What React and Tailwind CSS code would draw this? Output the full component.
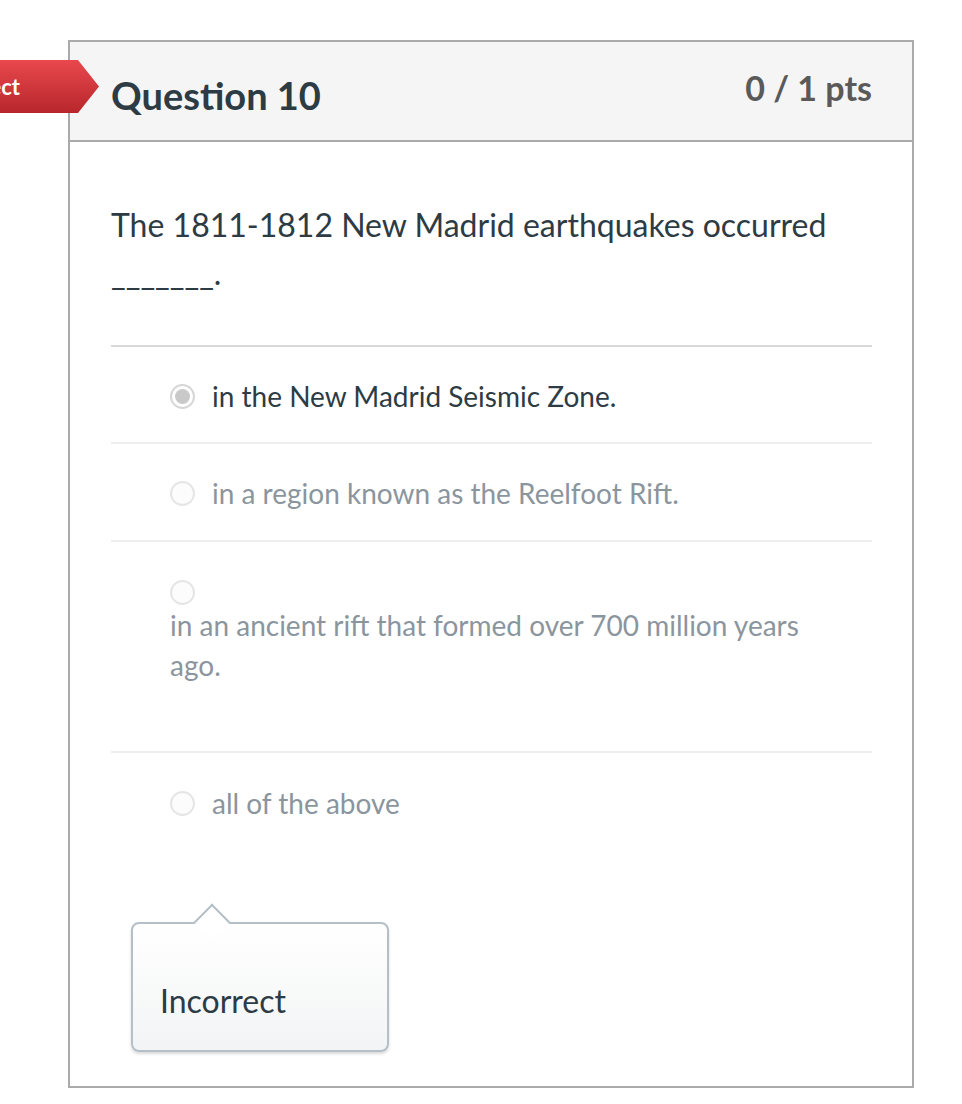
import React from 'react';

const answers = [
  { id: 1, text: 'in the New Madrid Seismic Zone.', selected: true, pad: 'pt-[29px] pb-[26px]' },
  { id: 2, text: 'in a region known as the Reelfoot Rift.', pad: 'pt-[29px] pb-[27px]' },
  { id: 3, text: 'in an ancient rift that formed over 700 million years ago.', long: true, pad: 'pt-[38px] pb-[66px]' },
  { id: 4, text: 'all of the above', last: true, pad: 'pt-[30px] pb-[26px]' },
];

function Radio({ selected }) {
  if (selected) {
    return (
      <span className="flex h-[25px] w-[25px] shrink-0 items-center justify-center rounded-full border-2 border-[#d6d6d6] bg-white">
        <span className="h-[15px] w-[15px] rounded-full bg-[#c9c9c9]" />
      </span>
    );
  }
  return <span className="block h-[25px] w-[25px] shrink-0 rounded-full border-2 border-[#e5e5e5] bg-[#fcfcfc]" />;
}

function AnswerRow({ answer }) {
  const color = answer.selected ? 'text-[#2d3b45]' : 'text-[#8b959e]';

  // long answers wrap under the radio, like the original page
  if (answer.long) {
    return (
      <div className={`border-b-2 border-[#eeeeee] pl-[59px] ${answer.pad}`}>
        <Radio />
        <div className={`w-[650px] text-[28px] leading-[40px] ${color}`}>{answer.text}</div>
      </div>
    );
  }

  return (
    <div className={`pl-[59px] ${answer.pad} ${answer.last ? '' : 'border-b-2 border-[#eeeeee]'}`}>
      <div className="flex h-[40px] items-center gap-[17px]">
        <Radio selected={answer.selected} />
        <span className={`text-[28px] leading-[40px] ${color}`}>{answer.text}</span>
      </div>
    </div>
  );
}

export default function App() {
  return (
    <div className="min-h-[1104px] bg-white pl-[68px] pt-[40px] font-['Lato','Noto_Sans',sans-serif]">
      <div className="relative w-[846px] border-2 border-[#aaaaaa] bg-white">

        {/* Result tag, mostly off screen */}
        <div className="absolute left-[-230px] top-[18px] z-10 flex h-[53px] w-[259px] items-center justify-end bg-gradient-to-b from-[#e8484e] to-[#b8262b] pr-[79px] text-[22px] font-bold text-white [clip-path:polygon(0_0,calc(100%_-_21px)_0,100%_50%,calc(100%_-_21px)_100%,0_100%)]">
          Incorrect
        </div>

        {/* Header */}
        <div className="flex h-[100px] items-start justify-between border-b-2 border-[#aaaaaa] bg-[#f5f5f5] pl-[41px] pr-[40px] pt-[26px]">
          <h2 className="mt-[5px] text-[38px] font-bold leading-[1.2] text-[#2d3b45]">Question 10</h2>
          <div className="text-[34px] font-bold leading-[1.2] text-[#5a5a5a]">0 / 1 pts</div>
        </div>

        {/* Body */}
        <div className="pl-[41px] pr-[40px] pt-[59px] pb-[34px]">
          <p className="text-[32px] leading-[48px] text-[#2d3b45]">
            The 1811-1812 New Madrid earthquakes occurred _______.
          </p>

          <div className="mt-[48px] border-t-2 border-[#d9d9d9]">
            {answers.map(a => (
              <AnswerRow key={a.id} answer={a} />
            ))}
          </div>

          {/* Feedback bubble */}
          <div className="relative ml-[20px] mt-[73px] h-[130px] w-[258px] rounded-[8px] border-2 border-[#b4bfc7] bg-gradient-to-b from-white to-[#f3f4f5] pl-[27px] pt-[59px] shadow-[0_2px_3px_rgba(0,0,0,0.15)]">
            <span className="absolute left-[66px] top-[-15px] h-[26px] w-[26px] rotate-45 border-l-2 border-t-2 border-[#b4bfc7] bg-white" />
            <p className="relative text-[32px] leading-[36px] text-[#2d3b45]">Incorrect</p>
          </div>
        </div>
      </div>
    </div>
  );
}
